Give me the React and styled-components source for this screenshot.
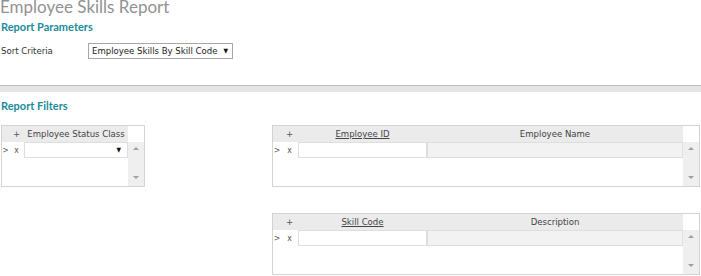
import React from 'react';
import styled, { createGlobalStyle } from 'styled-components';

const teal = '#218c9c';
const gridBorder = '#d3d3d3';

const GlobalStyle = createGlobalStyle`
  body {
    margin: 0;
    background: #fff;
    font-family: "DejaVu Sans Condensed", "DejaVu Sans", sans-serif;
    font-stretch: condensed;
  }
`;

const Page = styled.div`
  width: 701px;
`;

const Title = styled.h1`
  margin: -1.5px 0 0 0;
  font-family: 'Lato', sans-serif;
  font-weight: 400;
  font-size: 17px;
  line-height: 16px;
  color: #929292;
`;

const Heading = styled.h2`
  margin: ${p => p.$top}px 0 0 1px;
  font-family: 'Lato', sans-serif;
  font-weight: 700;
  font-size: 11px;
  line-height: 16px;
  color: ${teal};
`;

const ParamRow = styled.div`
  display: flex;
  align-items: center;
  margin-top: 8px;
  padding-left: 1px;
  height: 16px;
`;

const Label = styled.div`
  width: 87px;
  font-size: 9.5px;
  color: #333;
`;

const Select = styled.div`
  box-sizing: border-box;
  width: 145px;
  height: 16px;
  display: flex;
  align-items: center;
  justify-content: space-between;
  padding: 0 4px 0 3px;
  border: 1px solid #a6a6a6;
  font-size: 9.5px;
  color: #222;
`;

const Caret = styled.span`
  font-size: 6.5px;
  color: #111;
`;

const Divider = styled.div`
  margin-top: 26px;
  height: 6px;
  border-top: 1px solid #bcbcbc;
  background: #e4e4e4;
`;

const Filters = styled.div`
  display: flex;
  justify-content: space-between;
  align-items: flex-start;
  margin-top: 11px;
  padding: 0 1px;
`;

const RightColumn = styled.div`
  display: flex;
  flex-direction: column;
  gap: 26px;
`;

const Grid = styled.div`
  box-sizing: border-box;
  display: flex;
  width: ${p => p.$width}px;
  height: 62px;
  border: 1px solid ${gridBorder};
  font-size: 9.5px;
  color: #444;
`;

const GridMain = styled.div`
  flex: 1;
  display: flex;
  flex-direction: column;
`;

const HeaderRow = styled.div`
  display: flex;
  align-items: center;
  height: 16px;
  background: #ebebeb;
`;

const BodyRow = styled.div`
  display: flex;
  height: 16px;
`;

const MarkCell = styled.div`
  width: ${p => p.$w}px;
  display: flex;
  align-items: center;
  justify-content: center;
  color: #555;
  font-size: ${p => (p.$small ? 8.5 : 9.5)}px;
`;

const HeadCell = styled.div`
  width: ${p => p.$w}px;
  text-align: center;
  white-space: nowrap;
`;

const HeadLink = styled.span`
  text-decoration: underline;
`;

const Field = styled.div`
  box-sizing: border-box;
  width: ${p => p.$w}px;
  display: flex;
  align-items: center;
  justify-content: flex-end;
  padding-right: 6px;
  border: 1px solid #dedede;
  background: ${p => (p.$disabled ? '#f2f2f2' : '#fff')};
`;

const Scroll = styled.div`
  width: ${p => p.$w}px;
  display: flex;
  flex-direction: column;
`;

const ScrollHead = styled.div`
  height: 16px;
  background: #fff;
`;

const ScrollTrack = styled.div`
  flex: 1;
  display: flex;
  flex-direction: column;
  justify-content: space-between;
  align-items: center;
  padding: 5px 0 7px;
  background: #efefef;
`;

const Arrow = styled.span`
  width: 0;
  height: 0;
  border-left: 3px solid transparent;
  border-right: 3px solid transparent;
  ${p => (p.$down ? 'border-top' : 'border-bottom')}: 3px solid #a0a0a0;
`;

const FilterGrid = ({ width, marker, columns, scrollWidth }) => (
  <Grid $width={width}>
    <GridMain>
      <HeaderRow>
        <MarkCell $w={marker[0]} />
        <MarkCell $w={marker[1]}>+</MarkCell>
        {columns.map(c => (
          <HeadCell key={c.title} $w={c.width}>
            {c.link ? <HeadLink>{c.title}</HeadLink> : c.title}
          </HeadCell>
        ))}
      </HeaderRow>
      <BodyRow>
        <MarkCell $w={marker[0]} $small>&gt;</MarkCell>
        <MarkCell $w={marker[1]} $small>x</MarkCell>
        {columns.map(c => (
          <Field key={c.title} $w={c.width} $disabled={c.disabled}>
            {c.select && <Caret>▼</Caret>}
          </Field>
        ))}
      </BodyRow>
    </GridMain>
    <Scroll $w={scrollWidth}>
      <ScrollHead />
      <ScrollTrack>
        <Arrow />
        <Arrow $down />
      </ScrollTrack>
    </Scroll>
  </Grid>
);

export default function App() {
  return (
    <Page>
      <GlobalStyle />
      <Title>Employee Skills Report</Title>
      <Heading $top={4}>Report Parameters</Heading>
      <ParamRow>
        <Label>Sort Criteria</Label>
        <Select>
          Employee Skills By Skill Code
          <Caret>▼</Caret>
        </Select>
      </ParamRow>
      <Divider />
      <Heading $top={6}>Report Filters</Heading>
      <Filters>
        <FilterGrid
          width={144}
          marker={[7, 15]}
          scrollWidth={16}
          columns={[{ title: 'Employee Status Class', width: 104, select: true }]}
        />
        <RightColumn>
          <FilterGrid
            width={428}
            marker={[8, 17]}
            scrollWidth={16}
            columns={[
              { title: 'Employee ID', width: 129, link: true },
              { title: 'Employee Name', width: 256, disabled: true },
            ]}
          />
          <FilterGrid
            width={428}
            marker={[8, 17]}
            scrollWidth={16}
            columns={[
              { title: 'Skill Code', width: 129, link: true },
              { title: 'Description', width: 256, disabled: true },
            ]}
          />
        </RightColumn>
      </Filters>
    </Page>
  );
}
